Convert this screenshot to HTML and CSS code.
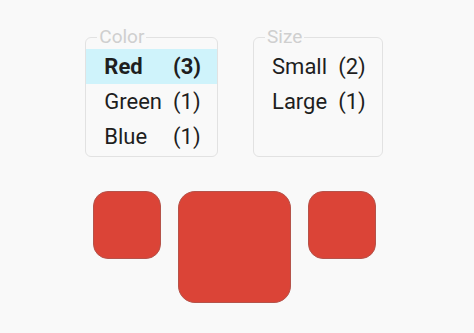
FILE: index.html
```html
<!DOCTYPE html>
<html>
<head>
<meta charset="utf-8">
<link rel="stylesheet" href="styles.css">
</head>
<body>
<div class="filters">
  <fieldset class="facet">
    <legend>Color</legend>
    <table class="options">
      <tr class="selected"><td class="name">Red</td><td class="count">(3)</td></tr>
      <tr><td class="name">Green</td><td class="count">(1)</td></tr>
      <tr><td class="name">Blue</td><td class="count">(1)</td></tr>
    </table>
  </fieldset>
  <fieldset class="facet">
    <legend>Size</legend>
    <table class="options">
      <tr><td class="name">Small</td><td class="count">(2)</td></tr>
      <tr><td class="name">Large</td><td class="count">(1)</td></tr>
    </table>
  </fieldset>
</div>
<div class="items">
  <div class="item small"></div>
  <div class="item large"></div>
  <div class="item small"></div>
</div>
</body>
</html>
```
FILE: styles.css
```css
html, body {
  margin: 0;
  background: #f9f9f9;
}
body {
  font-family: Roboto, "Noto Sans", sans-serif;
  color: #1e1e1e;
  padding-top: 26px;
}
.filters {
  display: flex;
  justify-content: center;
  align-items: stretch;
  gap: 35px;
  padding-right: 6px;
}
.facet {
  margin: 0;
  padding: 1px 0 2px;
  border: 1px solid #e2e2e2;
  border-radius: 6px;
  min-width: 0;
}
.facet legend {
  font-size: 19px;
  line-height: 22px;
  color: #cfcfcf;
  padding: 0 2px;
  margin-left: 11px;
}
.options {
  border-collapse: collapse;
  font-size: 22px;
}
.options td {
  height: 35px;
  padding: 0;
  white-space: nowrap;
}
.options .name {
  padding-left: 18px;
  padding-right: 11px;
}
.options .count {
  padding-right: 16px;
}
.options .selected {
  background: #cff3fb;
  font-weight: bold;
}
.items {
  display: flex;
  justify-content: center;
  align-items: flex-start;
  gap: 17px;
  margin-top: 34px;
  padding-right: 6px;
}
.item {
  background: #db4437;
  border: 1px solid #b5534a;
  box-sizing: border-box;
}
.item.small {
  width: 68px;
  height: 68px;
  border-radius: 15px;
}
.item.large {
  width: 113px;
  height: 112px;
  border-radius: 17px;
}
```
